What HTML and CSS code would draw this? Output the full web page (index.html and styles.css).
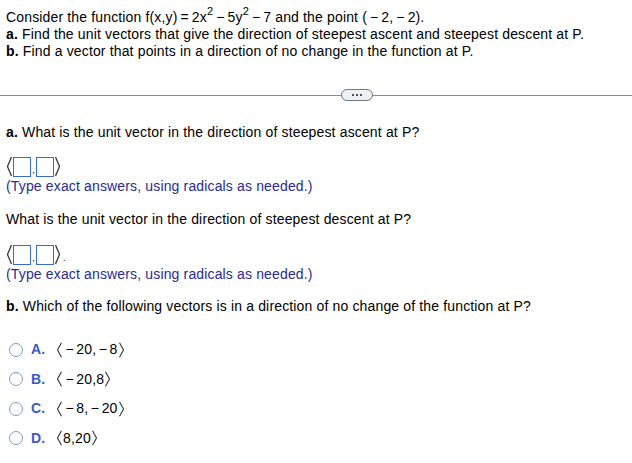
FILE: index.html
```html
<!DOCTYPE html>
<html>
<head>
<meta charset="utf-8">
<link rel="stylesheet" href="styles.css">
</head>
<body>
<div class="page">
  <div class="intro">
    <p class="line">Consider the function f(x,y)<span class="th"> </span>=<span class="th"> </span>2x<sup>2</sup><span class="th"> </span>−<span class="th"> </span>5y<sup>2</sup><span class="th"> </span>−<span class="th"> </span>7 and the point (<span class="th"> </span>−<span class="th"> </span>2,<span class="th"> </span>−<span class="th"> </span>2).</p>
    <p class="line"><b>a.</b> Find the unit vectors that give the direction of steepest ascent and steepest descent at P.</p>
    <p class="line"><b>b.</b> Find a vector that points in a direction of no change in the function at P.</p>
  </div>

  <div class="divider">
    <span class="rule rule-left"></span>
    <span class="more"><i></i><i></i><i></i></span>
    <span class="rule rule-right"></span>
  </div>

  <p class="line q-a"><b>a.</b> What is the unit vector in the direction of steepest ascent at P?</p>
  <div class="answer ans-1">
    <svg class="br" width="7" height="21" viewBox="0 0 7 21"><path d="M5.5 1 L1.5 10.5 L5.5 20" fill="none" stroke="#444" stroke-width="1.4"/></svg>
    <span class="box"></span><span class="comma">,</span><span class="box"></span>
    <svg class="br" width="7" height="21" viewBox="0 0 7 21"><path d="M1.5 1 L5.5 10.5 L1.5 20" fill="none" stroke="#444" stroke-width="1.4"/></svg>
  </div>
  <p class="line hint hint-1">(Type exact answers, using radicals as needed.)</p>

  <p class="line q-desc">What is the unit vector in the direction of steepest descent at P?</p>
  <div class="answer ans-2">
    <svg class="br" width="7" height="21" viewBox="0 0 7 21"><path d="M5.5 1 L1.5 10.5 L5.5 20" fill="none" stroke="#444" stroke-width="1.4"/></svg>
    <span class="box"></span><span class="comma">,</span><span class="box"></span>
    <svg class="br" width="7" height="21" viewBox="0 0 7 21"><path d="M1.5 1 L5.5 10.5 L1.5 20" fill="none" stroke="#444" stroke-width="1.4"/></svg>
    <span class="dot">.</span>
  </div>
  <p class="line hint hint-2">(Type exact answers, using radicals as needed.)</p>

  <p class="line q-b"><b>b.</b> Which of the following vectors is in a direction of no change of the function at P?</p>

  <ul class="options">
    <li class="option"><span class="radio"></span><span class="letter">A.</span><span class="vec"><svg class="vb" width="7" height="16" viewBox="0 0 7 16"><path d="M5.5 0.8 L1.5 8 L5.5 15.2" fill="none" stroke="#333" stroke-width="1.1"/></svg><span class="os"> </span>−<span class="os"> </span>20,<span class="os"> </span>−<span class="os"> </span>8<svg class="vb" width="7" height="16" viewBox="0 0 7 16"><path d="M1.5 0.8 L5.5 8 L1.5 15.2" fill="none" stroke="#333" stroke-width="1.1"/></svg></span></li>
    <li class="option"><span class="radio"></span><span class="letter">B.</span><span class="vec"><svg class="vb" width="7" height="16" viewBox="0 0 7 16"><path d="M5.5 0.8 L1.5 8 L5.5 15.2" fill="none" stroke="#333" stroke-width="1.1"/></svg><span class="os"> </span>−<span class="os"> </span>20,8<svg class="vb" width="7" height="16" viewBox="0 0 7 16"><path d="M1.5 0.8 L5.5 8 L1.5 15.2" fill="none" stroke="#333" stroke-width="1.1"/></svg></span></li>
    <li class="option"><span class="radio"></span><span class="letter">C.</span><span class="vec"><svg class="vb" width="7" height="16" viewBox="0 0 7 16"><path d="M5.5 0.8 L1.5 8 L5.5 15.2" fill="none" stroke="#333" stroke-width="1.1"/></svg><span class="os"> </span>−<span class="os"> </span>8,<span class="os"> </span>−<span class="os"> </span>20<svg class="vb" width="7" height="16" viewBox="0 0 7 16"><path d="M1.5 0.8 L5.5 8 L1.5 15.2" fill="none" stroke="#333" stroke-width="1.1"/></svg></span></li>
    <li class="option"><span class="radio"></span><span class="letter">D.</span><span class="vec"><svg class="vb" width="7" height="16" viewBox="0 0 7 16"><path d="M5.5 0.8 L1.5 8 L5.5 15.2" fill="none" stroke="#333" stroke-width="1.1"/></svg>8,20<svg class="vb" width="7" height="16" viewBox="0 0 7 16"><path d="M1.5 0.8 L5.5 8 L1.5 15.2" fill="none" stroke="#333" stroke-width="1.1"/></svg></span></li>
  </ul>
</div>
</body>
</html>
```
FILE: styles.css
```css
html, body {
  margin: 0;
  padding: 0;
  background: #ffffff;
}
.page {
  font-family: "Liberation Sans", Arial, sans-serif;
  font-size: 14px;
  letter-spacing: 0.15px;
  line-height: 17px;
  color: #000;
  padding: 9px 0 0 6px;
}
.line {
  margin: 0;
  white-space: nowrap;
}
.th {
  display: inline-block;
  width: 3px;
}
.os {
  display: inline-block;
  width: 2.5px;
}
sup {
  font-size: 11px;
  line-height: 0;
  vertical-align: 7px;
}
b {
  font-weight: bold;
}
.divider {
  display: flex;
  align-items: center;
  height: 12px;
  margin: 29px 0 0 -6px;
}
.rule {
  height: 1px;
  background: #858c94;
}
.rule-left {
  width: 341px;
}
.rule-right {
  flex: 1;
}
.more {
  box-sizing: border-box;
  width: 32px;
  height: 12px;
  border: 1px solid #6f7984;
  border-radius: 6px;
  background: #eef1f4;
  display: flex;
  align-items: center;
  justify-content: center;
  gap: 2px;
}
.more i {
  width: 2px;
  height: 2px;
  background: #4a5260;
}
.q-a { margin-top: 23px; }
.answer {
  display: flex;
  align-items: center;
  height: 21px;
}
.ans-1 { margin-top: 15px; }
.ans-2 { margin-top: 16px; }
.br { display: block; }
.box {
  box-sizing: border-box;
  width: 18px;
  height: 20px;
  border: 1px solid #3a6cd0;
}
.comma {
  font-size: 9px;
  width: 5px;
  text-align: center;
  align-self: flex-end;
  line-height: 14px;
}
.dot {
  margin-left: 2px;
  align-self: flex-end;
  line-height: 14px;
  font-size: 9px;
}
.hint {
  color: #2a2a8f;
}
.hint-1 { margin-top: 1px; }
.hint-2 { margin-top: 1px; }
.q-desc { margin-top: 16px; }
.q-b { margin-top: 15px; }
.options {
  list-style: none;
  margin: 26px 0 0 0;
  padding: 0;
  display: flex;
  flex-direction: column;
  gap: 12.5px;
}
.option {
  display: flex;
  align-items: center;
  height: 17px;
}
.radio {
  box-sizing: border-box;
  width: 14px;
  height: 14px;
  border: 1.5px solid #8399d6;
  border-radius: 50%;
  margin-left: 3px;
}
.letter {
  color: #3d58c8;
  font-weight: bold;
  margin-left: 8px;
  width: 25px;
}
.vec {
  display: flex;
  align-items: center;
}
.vb {
  display: block;
}
```
